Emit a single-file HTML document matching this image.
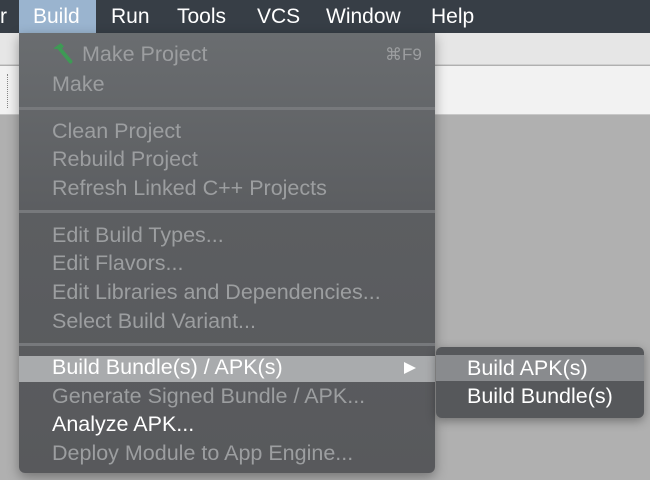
<!DOCTYPE html>
<html><head><style>
*{margin:0;padding:0;box-sizing:border-box}
body{width:650px;height:480px;overflow:hidden;position:relative;background:#b0b0b0;font-family:"Liberation Sans",sans-serif}
.bar{position:absolute;left:0;top:0;width:650px;height:33px;background:#373e46;color:#fff;font-size:21px}
.bar span{position:absolute;top:5px}
.hl{position:absolute;left:19px;top:0;width:77px;height:33px;background:#9ab4cf}
.strip1{position:absolute;left:0;top:33px;width:650px;height:32px;background:#e6e6e6;border-bottom:1px solid #cfcfcf}
.strip2{position:absolute;left:0;top:66px;width:650px;height:49px;background:#f2f2f2;border-bottom:1px solid #c8c8c8}
.dots{position:absolute;left:7px;top:74px;height:34px;border-left:1px dotted #888}
.menu{position:absolute;left:19px;top:33px;width:416px;height:440px;background:linear-gradient(#6a6d70,#5c5e61 40%,#58595c);border-radius:0 0 6px 6px;box-shadow:0 4px 12px rgba(0,0,0,.35)}
.it{position:absolute;left:33px;font-size:21.5px;color:#9c9ea0;white-space:nowrap;line-height:24px}
.w{color:#fff}
.sep{position:absolute;left:0;width:416px;height:3px;background:#77797c}
.sel{position:absolute;left:0;top:323px;width:416px;height:26px;background:#a9abad}
.sub{position:absolute;left:436px;top:347px;width:208px;height:71px;background:#56585b;border-radius:6px;box-shadow:0 3px 10px rgba(0,0,0,.35);overflow:hidden}
.sub .s{position:absolute;left:0;top:8px;width:208px;height:26px;background:#898b8e}
.sub div.t{position:absolute;left:31px;font-size:21.5px;color:#fff;line-height:24px;white-space:nowrap}
</style></head><body>
<div class="strip1"></div><div class="strip2"></div><div class="dots"></div>
<div class="bar"><div class="hl"></div>
<span style="left:0">r</span><span style="left:33px">Build</span><span style="left:111px">Run</span><span style="left:177px">Tools</span><span style="left:257px">VCS</span><span style="left:326px">Window</span><span style="left:431px">Help</span></div>
<div class="menu">
<svg style="position:absolute;left:33px;top:9px" width="24" height="24" viewBox="0 0 22 22"><path d="M1 6 L8 1 L11 4 L8 7 Z" fill="#3e9a55"/><path d="M7 6 L17 18" stroke="#3e9a55" stroke-width="3.5" stroke-linecap="round"/></svg>
<div class="it" style="left:63px;top:9px">Make Project</div>
<div class="it" style="left:366px;top:10px;font-size:17px">⌘F9</div>
<div class="it" style="top:39px">Make</div>
<div class="sep" style="top:74px"></div>
<div class="it" style="top:86px">Clean Project</div>
<div class="it" style="top:114px">Rebuild Project</div>
<div class="it" style="top:143px">Refresh Linked C++ Projects</div>
<div class="sep" style="top:177px"></div>
<div class="it" style="top:190px">Edit Build Types...</div>
<div class="it" style="top:218px">Edit Flavors...</div>
<div class="it" style="top:247px">Edit Libraries and Dependencies...</div>
<div class="it" style="top:276px">Select Build Variant...</div>
<div class="sep" style="top:310px"></div>
<div class="sel"></div>
<div class="it w" style="top:322px">Build Bundle(s) / APK(s)</div>
<svg style="position:absolute;left:384px;top:328px" width="14" height="14"><path d="M1 1 L13 7 L1 13 Z" fill="#fff"/></svg>
<div class="it" style="top:351px">Generate Signed Bundle / APK...</div>
<div class="it w" style="top:379px">Analyze APK...</div>
<div class="it" style="top:408px">Deploy Module to App Engine...</div>
</div>
<div class="sub"><div class="s"></div>
<div class="t" style="top:9px">Build APK(s)</div>
<div class="t" style="top:37px">Build Bundle(s)</div></div>
</body></html>
